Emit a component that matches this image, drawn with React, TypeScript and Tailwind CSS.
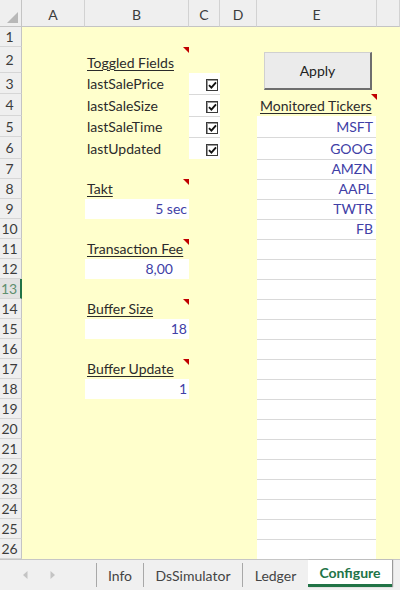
import React from 'react'

const COLS = ['A', 'B', 'C', 'D', 'E', 'F']
const ROWS = Array.from({ length: 26 }, (_, i) => i + 1)

const toggled: Record<number, string> = {
  3: 'lastSalePrice',
  4: 'lastSaleSize',
  5: 'lastSaleTime',
  6: 'lastUpdated',
}

const labels: Record<number, string> = {
  2: 'Toggled Fields',
  8: 'Takt',
  11: 'Transaction Fee',
  14: 'Buffer Size',
  17: 'Buffer Update',
}

const values: Record<number, string> = { 9: '5 sec', 12: '8,00', 15: '18', 18: '1' }

const tickers = ['MSFT', 'GOOG', 'AMZN', 'AAPL', 'TWTR', 'FB']

const CommentMark: React.FC = () => (
  <span className="absolute top-0 right-0 w-0 h-0 border-t-[6px] border-l-[6px] border-t-[#c00000] border-l-transparent" />
)

const CheckBox: React.FC = () => (
  <span className="w-[12px] h-[12px] border border-[#3a3a3a] bg-white flex items-center justify-center shadow-[inset_1px_1px_0_#9a9a9a]">
    <svg width="9" height="8" viewBox="0 0 9 8">
      <path d="M1 4.2 L3.4 6.6 L8 1.4" fill="none" stroke="#111" strokeWidth="1.9" />
    </svg>
  </span>
)

const Cell: React.FC<{ row: number; col: string }> = ({ row, col }) => {
  const base = 'relative flex items-end leading-[18px] pb-[1px] min-w-0'

  if (col === 'B' && labels[row]) {
    return (
      <div className={`${base} bg-[#ffffcc] pl-[2px]`}>
        <span className="underline underline-offset-[2px] decoration-[1px] text-[#2b2b2b] whitespace-nowrap">
          {labels[row]}
        </span>
        <CommentMark />
      </div>
    )
  }

  if (col === 'B' && toggled[row]) {
    return <div className={`${base} bg-[#ffffcc] pl-[2px] text-[#2b2b2b] whitespace-nowrap`}>{toggled[row]}</div>
  }

  if (col === 'B' && values[row]) {
    // the fee cell uses an accounting-style format, so its text sits further in
    return (
      <div className={`${base} bg-white justify-end ${row === 12 ? 'pr-[16px]' : 'pr-[2px]'} text-[#4040a6]`}>
        {values[row]}
      </div>
    )
  }

  if (col === 'C' && toggled[row]) {
    return (
      <div
        className={`relative flex items-end justify-end pr-[2px] pb-[3px] bg-white ${row > 3 ? 'border-t border-[#d9d9d9]' : ''}`}
      >
        <CheckBox />
      </div>
    )
  }

  if (col === 'E' && row === 2) {
    return (
      <div className="relative bg-[#ffffcc]">
        <button
          type="button"
          className="absolute left-[7px] top-[5px] z-10 w-[108px] h-[38px] bg-[#ebebeb] border-t border-l border-[#d0d0d0] border-r-2 border-b-2 border-r-[#6e6e6e] border-b-[#6e6e6e] text-[#222] flex items-center justify-center"
        >
          Apply
        </button>
      </div>
    )
  }

  if (col === 'E' && row === 4) {
    return (
      <div className={`${base} bg-[#ffffcc] pl-[3px]`}>
        <span className="underline underline-offset-[2px] decoration-[1px] text-[#2b2b2b] whitespace-nowrap">
          Monitored Tickers
        </span>
        <CommentMark />
      </div>
    )
  }

  if (col === 'E' && row >= 5) {
    return (
      <div
        className={`${base} bg-white justify-end pr-[3px] mr-[1px] text-[#4040a6] ${row > 5 ? 'border-t border-[#d9d9d9]' : ''}`}
      >
        {tickers[row - 5] ?? ''}
      </div>
    )
  }

  return <div className="bg-[#ffffcc]" />
}

const RowHeader: React.FC<{ row: number }> = ({ row }) => {
  const active = row === 13
  return (
    <div
      className={`flex items-center justify-center pr-[2px] border-b border-[#d6d6d6] ${
        active
          ? 'bg-[#e2e2e2] text-[#5f8f6f] border-r-2 border-r-[#217346]'
          : 'bg-[#efefef] text-[#3c3c3c] border-r border-r-[#c4c4c4]'
      }`}
    >
      {row}
    </div>
  )
}

const SheetTabs: React.FC = () => (
  <div className="h-[31px] flex bg-[#f0f0f0] border-t border-[#c6c6c6] text-[#444]">
    <div className="w-[96px] flex items-center gap-[22px] pl-[23px]">
      <svg width="5" height="8" viewBox="0 0 5 8">
        <path d="M4.5 0 L0 4 L4.5 8 Z" fill="#c4c4c4" />
      </svg>
      <svg width="5" height="8" viewBox="0 0 5 8">
        <path d="M0.5 0 L5 4 L0.5 8 Z" fill="#c4c4c4" />
      </svg>
    </div>
    <div className="w-[47px] flex items-center justify-center border-l border-[#a8a8a8] my-[3px]">Info</div>
    <div className="w-[99px] flex items-center justify-center border-l border-[#a8a8a8] my-[3px]">DsSimulator</div>
    <div className="w-[66px] flex items-center justify-center border-l border-[#a8a8a8] my-[3px]">Ledger</div>
    <div className="w-[84px] flex items-center justify-center bg-white font-bold text-[#217346] border-b-[3px] border-[#217346] mb-[3px] shadow-[1px_0_1px_#9a9a9a]">
      Configure
    </div>
  </div>
)

const App: React.FC = () => {
  return (
    <div className="w-[400px] h-[590px] overflow-hidden bg-[#ffffcc] text-[14px] font-['Lato','Noto_Sans',sans-serif]">
      <div className="grid grid-cols-[22px_63px_104px_31px_37px_120px_1fr] grid-rows-[27px_20px_26px_21px_22px_21px_22px_repeat(20,20px)]">
        <div className="relative bg-[#efefef] border-r border-b border-[#c4c4c4]">
          <svg className="absolute right-[3px] bottom-[3px]" width="11" height="11" viewBox="0 0 11 11">
            <path d="M11 0 L11 11 L0 11 Z" fill="#b8b8b8" />
          </svg>
        </div>
        {COLS.map((c) => (
          <div
            key={c}
            className="flex items-center justify-center pt-[2px] bg-[#efefef] text-[#3c3c3c] border-b border-b-[#c4c4c4] border-r border-r-[#d2d2d2]"
          >
            {c === 'F' ? '' : c}
          </div>
        ))}
        {ROWS.map((r) => (
          <React.Fragment key={r}>
            <RowHeader row={r} />
            {COLS.map((c) => (
              <Cell key={c} row={r} col={c} />
            ))}
          </React.Fragment>
        ))}
      </div>
      <SheetTabs />
    </div>
  )
}

export default App
